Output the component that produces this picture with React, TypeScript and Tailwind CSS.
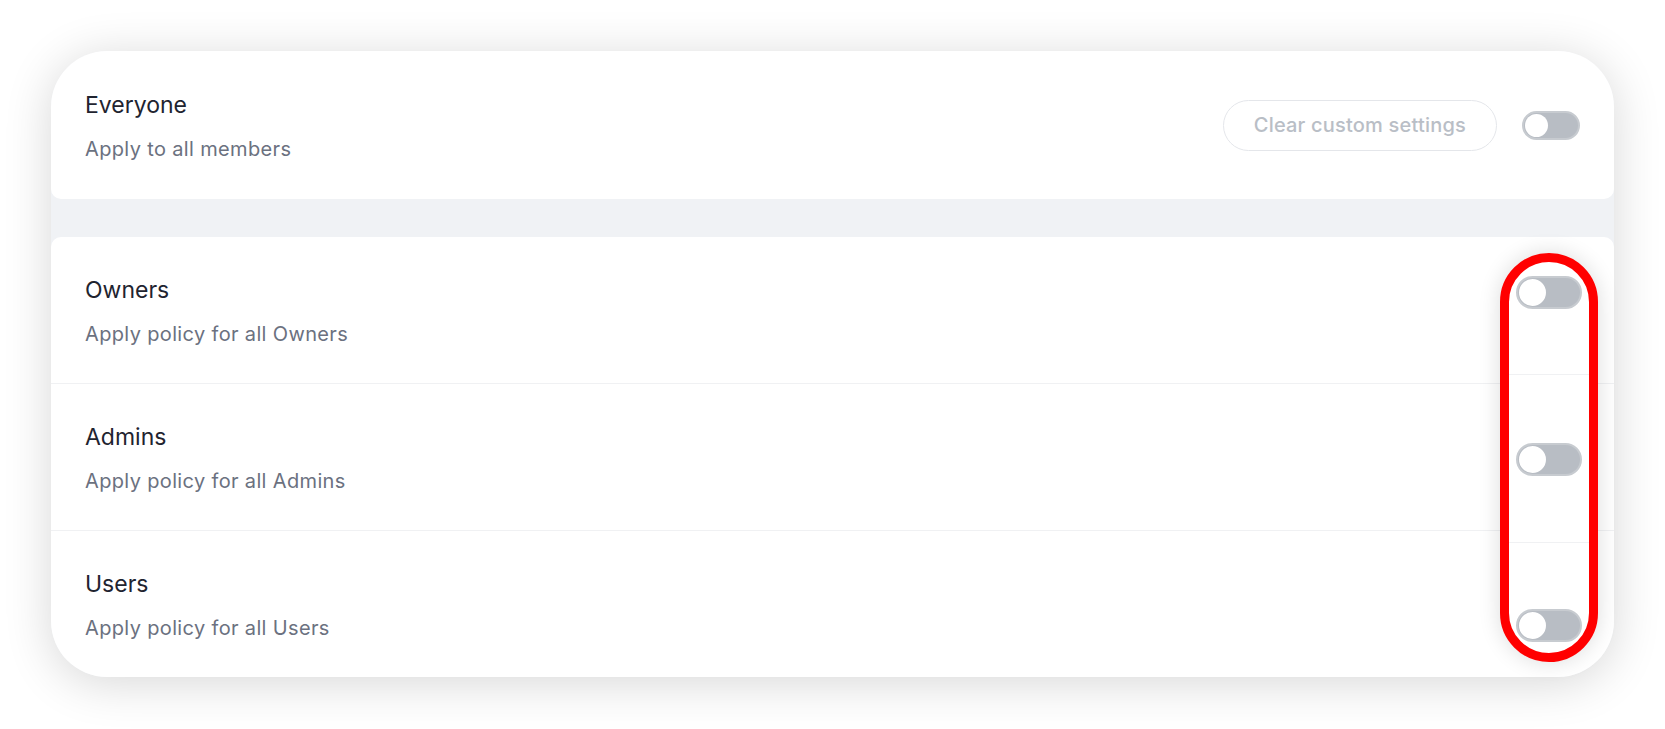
import React from "react";

function Toggle({ size = "md" }: { size?: "sm" | "md" }) {
  const track =
    size === "sm"
      ? "w-[58px] h-[29px]"
      : "w-[66px] h-[33px]";
  const knob = size === "sm" ? "w-[23px] h-[23px]" : "w-[27px] h-[27px]";
  return (
    <div
      className={`${track} shrink-0 rounded-full bg-[#b8bdc4] border-2 border-[#c7cbd0] p-px flex items-center`}
    >
      <div className={`${knob} rounded-full bg-white`} />
    </div>
  );
}

const rows = [
  { title: "Owners", desc: "Apply policy for all Owners" },
  { title: "Admins", desc: "Apply policy for all Admins" },
  { title: "Users", desc: "Apply policy for all Users" },
];

export default function App() {
  return (
    <div
      className="relative w-full h-[729px] bg-white pl-[51px] pt-[51px]"
      style={{ fontFamily: "Inter, 'Noto Sans', sans-serif" }}
    >
      <div className="w-[1563px] h-[626px] rounded-[56px] overflow-hidden bg-[#f0f2f5] shadow-[0_6px_48px_rgba(0,0,0,0.16)] flex flex-col">
        {/* Everyone */}
        <div className="h-[148px] shrink-0 bg-white rounded-b-[10px] flex items-center justify-between pl-[34px] pr-[34px]">
          <div className="flex flex-col gap-[17px] pt-[2px]">
            <span className="text-[23px] leading-[28px] text-[#1f2430]">Everyone</span>
            <span className="text-[20px] leading-[26px] tracking-[0.35px] text-[#6b7180]">Apply to all members</span>
          </div>
          <div className="flex items-center gap-[25px]">
            <button className="h-[51px] px-[30px] rounded-full border border-[#e4e6ea] text-[20px] font-medium tracking-[0.2px] text-[#b9bec6]">
              Clear custom settings
            </button>
            <Toggle size="sm" />
          </div>
        </div>

        {/* Roles */}
        <div className="mt-[38px] flex-1 bg-white rounded-t-[10px] flex flex-col">
          {rows.map((r, i) => (
            <div
              key={r.title}
              className={`flex-1 flex items-center pl-[34px] ${
                i < rows.length - 1 ? "border-b border-[#f0f1f3]" : ""
              }`}
            >
              <div className="flex flex-col gap-[17px] pt-[2px]">
                <span className="text-[23px] leading-[28px] text-[#1f2430]">{r.title}</span>
                <span className="text-[20px] leading-[26px] tracking-[0.35px] text-[#6b7180]">{r.desc}</span>
              </div>
            </div>
          ))}
        </div>
      </div>

      {/* Highlight annotation over the toggles */}
      <div className="absolute left-[1500px] top-[253px] w-[98px] h-[409px] rounded-full border-[9px] border-[#ff0000] bg-white shadow-[0_0_22px_rgba(0,0,0,0.14)] flex flex-col items-center pt-[14px] overflow-hidden">
        <Toggle />
        <div className="mt-[65px] h-px w-full bg-[#f0f1f3]" />
        <div className="mt-[68px]">
          <Toggle />
        </div>
        <div className="mt-[66px] h-px w-full bg-[#f0f1f3]" />
        <div className="mt-[66px]">
          <Toggle />
        </div>
      </div>
    </div>
  );
}
